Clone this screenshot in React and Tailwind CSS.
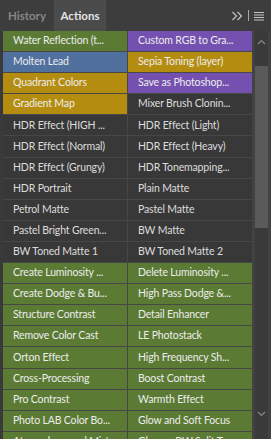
import React from "react";

const G = "bg-[#5b7b35]";
const B = "bg-[#50709e]";
const Y = "bg-[#b48d10]";
const P = "bg-[#7451b0]";
const D = "bg-[#383838]";

const rows = [
  [["Water Reflection (t...", G], ["Custom RGB to Gra...", P]],
  [["Molten Lead", B], ["Sepia Toning (layer)", Y]],
  [["Quadrant Colors", Y], ["Save as Photoshop...", P]],
  [["Gradient Map", Y], ["Mixer Brush Clonin...", D]],
  [["HDR Effect (HIGH ...", D], ["HDR Effect (Light)", D]],
  [["HDR Effect (Normal)", D], ["HDR Effect (Heavy)", D]],
  [["HDR Effect (Grungy)", D], ["HDR Tonemapping...", D]],
  [["HDR Portrait", D], ["Plain Matte", D]],
  [["Petrol Matte", D], ["Pastel Matte", D]],
  [["Pastel Bright Green...", D], ["BW Matte", D]],
  [["BW Toned Matte 1", D], ["BW Toned Matte 2", D]],
  [["Create Luminosity ...", G], ["Delete Luminosity ...", G]],
  [["Create Dodge & Bu...", G], ["High Pass Dodge &...", G]],
  [["Structure Contrast", G], ["Detail Enhancer", G]],
  [["Remove Color Cast", G], ["LE Photostack", G]],
  [["Orton Effect", G], ["High Frequency Sh...", G]],
  [["Cross-Processing", G], ["Boost Contrast", G]],
  [["Pro Contrast", G], ["Warmth Effect", G]],
  [["Photo LAB Color Bo...", G], ["Glow and Soft Focus", G]],
  [["Atmosphere and Mist", G], ["Gloomy BW Split T...", G]],
];

export default function App() {
  return (
    <div
      className="w-[271px] h-[439px] overflow-hidden bg-[#424242] flex flex-col"
      style={{ fontFamily: 'Lato, "Noto Sans", sans-serif' }}
    >
      <div className="h-[31px] flex items-stretch bg-[#3d3d3d] shrink-0">
        <div className="w-[54px] flex items-center justify-center text-[11.5px] font-bold text-[#878787]">
          History
        </div>
        <div className="w-[52px] flex items-center justify-center text-[11.5px] font-bold text-[#e4e4e4] bg-[#4b4b4b]">
          Actions
        </div>
        <div className="flex-1" />
        <div className="flex items-center gap-[4px] pr-[6px] text-[#bdbdbd]">
          <svg width="13" height="10" viewBox="0 0 13 10" fill="none" stroke="#c4c4c4" strokeWidth="1.2">
            <path d="M1.5 1 L5.5 5 L1.5 9" />
            <path d="M6.5 1 L10.5 5 L6.5 9" />
          </svg>
          <div className="w-px h-[11px] bg-[#a8a8a8]" />
          <svg width="12" height="10" viewBox="0 0 12 10" fill="none" stroke="#c4c4c4" strokeWidth="1.2">
            <path d="M1 1.5 H11 M1 4 H11 M1 6.5 H11 M1 9 H11" />
          </svg>
        </div>
      </div>
      <div className="flex flex-1 min-h-0 bg-[#424242]">
        <div className="w-[3px] bg-[#3a3a3a]" />
        <div className="w-[249px] flex flex-col gap-px bg-[#474747]">
          {rows.map((r, i) => (
            <div key={i} className="grid grid-cols-2 gap-px h-[20.1px] shrink-0">
              {r.map(([t, c], j) => (
                <div
                  key={j}
                  className={`${c} flex items-center pl-[10px] text-[10.5px] tracking-[-0.15px] whitespace-nowrap overflow-hidden ${c === D ? "text-[#dcdcdc]" : "text-[#ececec]"}`}
                >
                  {t}
                </div>
              ))}
            </div>
          ))}
        </div>
        <div className="w-[3px]" />
        <div className="w-[13px] flex flex-col bg-[#3a3a3a]">
          <div className="h-[22px] flex items-center justify-center">
            <svg width="9" height="6" viewBox="0 0 9 6" fill="none" stroke="#8a8a8a" strokeWidth="1.2">
              <path d="M1 5 L4.5 1.5 L8 5" />
            </svg>
          </div>
          <div className="h-[13px]" />
          <div className="h-[162px] bg-[#5a5a5a]" />
          <div className="flex-1" />
          <div className="h-[22px] flex items-center justify-center mb-[14px]">
            <svg width="9" height="6" viewBox="0 0 9 6" fill="none" stroke="#8a8a8a" strokeWidth="1.2">
              <path d="M1 1 L4.5 4.5 L8 1" />
            </svg>
          </div>
        </div>
      </div>
    </div>
  );
}
